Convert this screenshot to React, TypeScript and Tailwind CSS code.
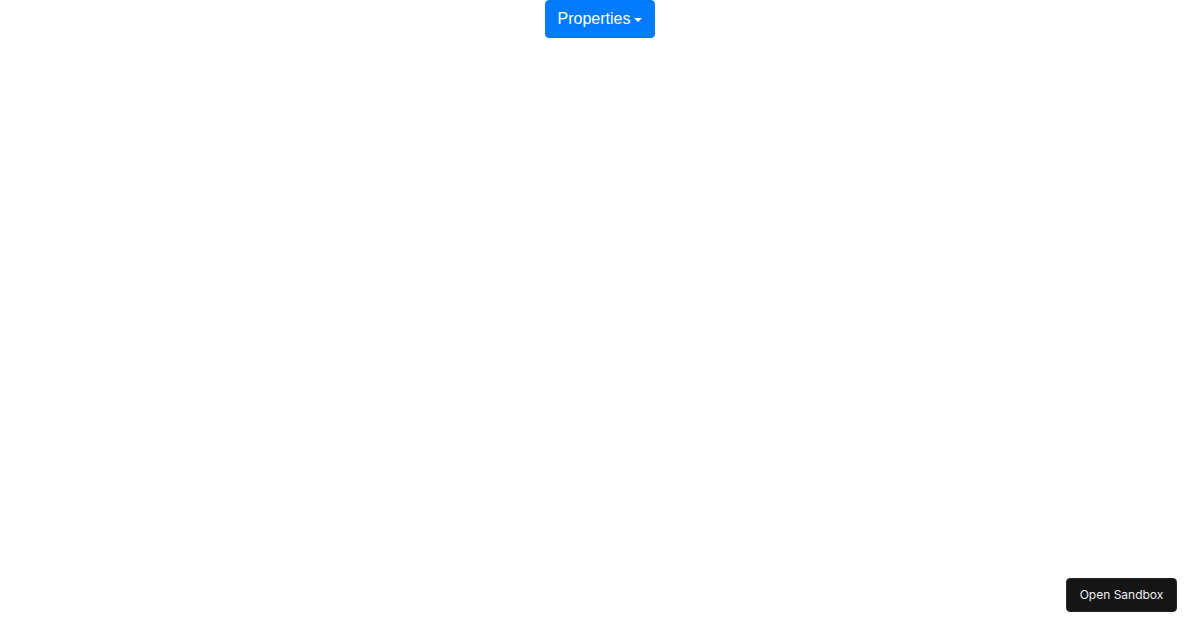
export default function App() {
    return (
        <div className="relative w-[1200px] h-[630px] bg-white font-['Liberation_Sans',Arial,sans-serif]">
            {/* Dropdown toggle */}
            <div className="flex justify-center">
                <button className="flex items-center h-[38px] px-3 border border-[#007bff] bg-[#007bff] text-white text-base leading-6 rounded-[4px]">
                    Properties
                    <span className="ml-[4px] mt-[1px] w-0 h-0 border-t-[4px] border-t-white border-x-[4px] border-x-transparent" />
                </button>
            </div>

            {/* Sandbox link */}
            <button className="absolute right-[23px] bottom-[18px] w-[111px] h-[34px] bg-[#151515] text-[#f0f0f0] text-[12px] rounded-[4px] border border-[#2a2a2a] font-['Inter','Liberation_Sans',sans-serif]">
                Open Sandbox
            </button>
        </div>
    )
}
